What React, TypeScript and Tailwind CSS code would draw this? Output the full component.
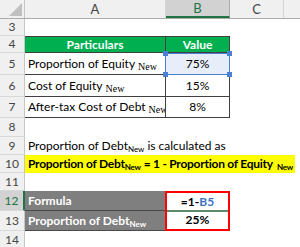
import React from 'react';

type RowProps = {
    n: number;
    h: string;
    sel?: boolean;
    children?: React.ReactNode;
};

// row number on the left + the cells of that row
function Row({ n, h, sel, children }: RowProps) {
    return (
        <div className={`flex ${h}`}>
            <div
                className={
                    sel
                        ? 'w-[25px] shrink-0 flex items-center justify-center border-b border-b-[#d8d8d8] border-r-2 border-r-[#217346] bg-[#d2d2d2] text-[#217346]'
                        : 'w-[25px] shrink-0 flex items-center justify-center border-b border-b-[#d8d8d8] border-r border-r-[#c6c6c6] bg-[#f0f0f0] text-[#444]'
                }
            >
                {n}
            </div>
            {children}
        </div>
    );
}

function SerifSub() {
    return <span className="font-['Liberation_Serif'] text-[10px] relative top-[3px] ml-[3px]">New</span>;
}

function SansSub({ gap }: { gap?: boolean }) {
    return <span className={gap ? 'text-[8px] relative top-[3px] ml-[4px]' : 'text-[8px] relative top-[3px] mr-[3px]'}>New</span>;
}

const tableCell = 'shrink-0 flex items-center border-r border-b border-[#404040]';

export default function App() {
    return (
        <div className="w-[300px] h-[247px] overflow-hidden bg-white font-['Lato',sans-serif] text-[12px] text-black leading-none">
            {/* column headers */}
            <div className="flex h-[19px] bg-[#f0f0f0] border-b border-[#ababab] text-[#444] text-[13px]">
                <div className="w-[25px] shrink-0 border-r border-[#c6c6c6] flex items-end justify-end pr-[2px] pb-[2px]">
                    <svg width="13" height="13" viewBox="0 0 13 13">
                        <polygon points="13,0 13,13 0,13" fill="#c0c0c0" />
                    </svg>
                </div>
                <div className="w-[141px] shrink-0 border-r border-[#d4d4d4] flex items-center justify-center">A</div>
                <div className="w-[64px] shrink-0 border-r border-[#ababab] bg-[#d2d2d2] border-b-2 border-b-[#217346] flex items-center justify-center text-[#217346]">
                    B
                </div>
                <div className="w-[54px] shrink-0 border-r border-[#d4d4d4] flex items-center justify-center">C</div>
                <div className="flex-1" />
            </div>

            <Row n={3} h="h-[17px]" />

            <Row n={4} h="h-[17px]">
                <div className={`${tableCell} w-[141px] border-t bg-[#00b050] justify-center font-bold text-white`}>Particulars</div>
                <div className={`${tableCell} w-[64px] border-t bg-[#00b050] justify-center font-bold text-white`}>Value</div>
            </Row>

            <Row n={5} h="h-[22px]">
                <div className={`${tableCell} w-[141px] pl-[3px]`}>
                    Proportion of Equity<SerifSub />
                </div>
                <div className="relative shrink-0 flex items-center justify-center bg-[#e7eef9] border border-[#4a7fd3] -ml-px w-[65px]">
                    75%
                    <span className="absolute -left-[3px] -top-[3px] w-[5px] h-[5px] bg-[#4a7fd3]" />
                    <span className="absolute -right-[3px] -top-[3px] w-[5px] h-[5px] bg-[#4a7fd3]" />
                    <span className="absolute -left-[3px] -bottom-[3px] w-[5px] h-[5px] bg-[#4a7fd3]" />
                    <span className="absolute -right-[3px] -bottom-[3px] w-[5px] h-[5px] bg-[#4a7fd3]" />
                </div>
            </Row>

            <Row n={6} h="h-[22px]">
                <div className={`${tableCell} w-[141px] pl-[3px]`}>
                    Cost of Equity<SerifSub />
                </div>
                <div className={`${tableCell} w-[64px] justify-center`}>15%</div>
            </Row>

            <Row n={7} h="h-[21px]">
                <div className={`${tableCell} w-[141px] pl-[3px] whitespace-nowrap overflow-hidden`}>
                    After-tax Cost of Debt<SerifSub />
                </div>
                <div className={`${tableCell} w-[64px] justify-center`}>8%</div>
            </Row>

            <Row n={8} h="h-[19px]" />

            <Row n={9} h="h-[18px]">
                <div className="flex items-center pl-[3px] whitespace-nowrap">
                    Proportion of Debt<SansSub />is calculated as
                </div>
            </Row>

            <Row n={10} h="h-[18px]">
                <div className="w-[270px] shrink-0 bg-[#ffff00] flex items-center pl-[3px] whitespace-nowrap font-bold tracking-[-0.25px]">
                    Proportion of Debt<SansSub />= 1 - Proportion of Equity<SansSub gap />
                </div>
            </Row>

            <Row n={11} h="h-[18px]" />

            <Row n={12} h="h-[20px]" sel>
                <div className="w-[140px] shrink-0 bg-[#7f7f7f] border-b border-[#4a4a4a] flex items-center pl-[3px] font-bold text-white">
                    Formula
                </div>
                <div className="relative w-[65px] shrink-0 border-2 border-b-0 border-[#ff0000] flex items-center justify-center font-bold">
                    <span>
                        =1-<span className="text-[#4472c4]">B5</span>
                    </span>
                    <span className="absolute left-0 right-0 -bottom-px h-[2px] bg-[#5b8a6c]" />
                </div>
            </Row>

            <Row n={13} h="h-[20px]">
                <div className="w-[140px] shrink-0 bg-[#7f7f7f] border-b border-[#4a4a4a] flex items-center pl-[3px] font-bold text-white whitespace-nowrap">
                    Proportion of Debt<SansSub />
                </div>
                <div className="w-[65px] shrink-0 border-2 border-t-0 border-[#ff0000] flex items-center justify-center font-bold">25%</div>
            </Row>

            <Row n={14} h="h-[18px]" />
        </div>
    );
}
